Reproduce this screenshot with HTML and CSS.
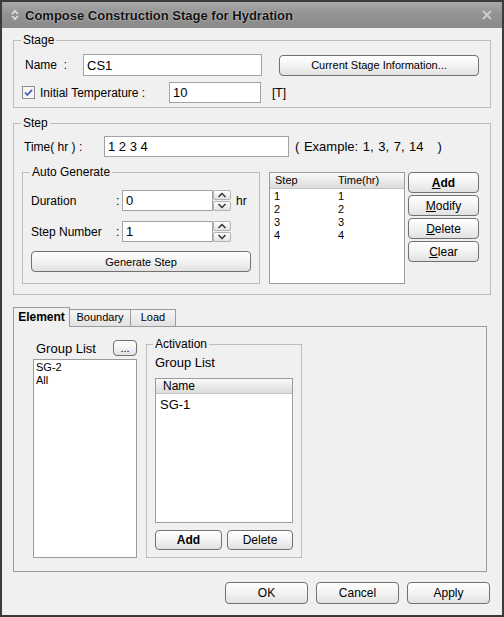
FILE: index.html
```html
<!DOCTYPE html>
<html lang="en">
<head>
    <meta charset="UTF-8">
    <title>Compose Construction Stage for Hydration</title>
    <link rel="stylesheet" href="styles.css">
</head>
<body>
<div class="window">
    <div class="titlebar">
        <svg class="title-icon" viewBox="0 0 8 12"><path d="M1 5 4 2 7 5M1 7 4 10 7 7" fill="none" stroke="#e4e4e4" stroke-width="1.6"/></svg>
        <span class="title">Compose Construction Stage for Hydration</span>
        <svg class="close" viewBox="0 0 10 10"><path d="M1 1 9 9M9 1 1 9" stroke="#cdcdcd" stroke-width="2"/></svg>
    </div>

    <div class="content">
        <fieldset class="group stage">
            <legend>Stage</legend>
            <div class="row">
                <span class="lbl lbl-name">Name&nbsp; :</span>
                <input class="field f-name" type="text" value="CS1">
                <button class="btn btn-info">Current Stage Information...</button>
            </div>
            <div class="row row-temp">
                <span class="check"><svg viewBox="0 0 13 13"><rect x="0.5" y="0.5" width="12" height="12" fill="#f6f6f6" stroke="#8e8e8e"/><path d="M3 6.5 5.3 9 10 3.8" fill="none" stroke="#3f5fc4" stroke-width="1.8"/></svg></span>
                <span class="lbl lbl-temp">Initial Temperature :</span>
                <input class="field f-temp" type="text" value="10">
                <span class="unit">[T]</span>
            </div>
        </fieldset>

        <fieldset class="group step">
            <legend>Step</legend>
            <div class="row">
                <span class="lbl lbl-time">Time( hr ) :</span>
                <input class="field f-time" type="text" value="1 2 3 4">
                <span class="example">( Example: 1, 3, 7, 14&nbsp;&nbsp; )</span>
            </div>
            <div class="step-main">
                <fieldset class="group auto">
                    <legend>Auto Generate</legend>
                    <div class="row">
                        <span class="lbl lbl-auto">Duration</span><span class="colon">:</span>
                        <input class="field f-num" type="text" value="0">
                        <span class="spin">
                            <span class="spin-btn"><svg viewBox="0 0 16 8"><path d="M4.5 6 8 2.5 11.5 6" fill="none" stroke="#333" stroke-width="1.5"/></svg></span>
                            <span class="spin-btn"><svg viewBox="0 0 16 8"><path d="M4.5 2 8 5.5 11.5 2" fill="none" stroke="#333" stroke-width="1.5"/></svg></span>
                        </span>
                        <span class="unit-hr">hr</span>
                    </div>
                    <div class="row row-next">
                        <span class="lbl lbl-auto">Step Number</span><span class="colon">:</span>
                        <input class="field f-num" type="text" value="1">
                        <span class="spin">
                            <span class="spin-btn"><svg viewBox="0 0 16 8"><path d="M4.5 6 8 2.5 11.5 6" fill="none" stroke="#333" stroke-width="1.5"/></svg></span>
                            <span class="spin-btn"><svg viewBox="0 0 16 8"><path d="M4.5 2 8 5.5 11.5 2" fill="none" stroke="#333" stroke-width="1.5"/></svg></span>
                        </span>
                    </div>
                    <button class="btn btn-gen">Generate Step</button>
                </fieldset>

                <div class="listview steps">
                    <div class="lv-head"><span class="col-step">Step</span><span>Time(hr)</span></div>
                    <div class="lv-body">
                        <div class="lv-row"><span class="col-step">1</span><span>1</span></div>
                        <div class="lv-row"><span class="col-step">2</span><span>2</span></div>
                        <div class="lv-row"><span class="col-step">3</span><span>3</span></div>
                        <div class="lv-row"><span class="col-step">4</span><span>4</span></div>
                    </div>
                </div>

                <div class="side-btns">
                    <button class="btn btn-side"><b><u>A</u>dd</b></button>
                    <button class="btn btn-side"><u>M</u>odify</button>
                    <button class="btn btn-side"><u>D</u>elete</button>
                    <button class="btn btn-side"><u>C</u>lear</button>
                </div>
            </div>
        </fieldset>

        <div class="tabs">
            <div class="tab tab-element active">Element</div>
            <div class="tab tab-boundary">Boundary</div>
            <div class="tab tab-load">Load</div>
        </div>
        <div class="tab-panel">
            <div class="group-col">
                <div class="col-head">
                    <span class="col-title">Group List</span>
                    <button class="btn btn-more">...</button>
                </div>
                <div class="listbox">
                    <div>SG-2</div>
                    <div>All</div>
                </div>
            </div>
            <fieldset class="group activation">
                <legend>Activation</legend>
                <div class="sub-lbl">Group List</div>
                <div class="listview act-list">
                    <div class="lv-head"><span class="col-name">Name</span></div>
                    <div class="lv-body">
                        <div class="lv-row act-row">SG-1</div>
                    </div>
                </div>
                <div class="act-btns">
                    <button class="btn btn-act"><b>Add</b></button>
                    <button class="btn btn-act">Delete</button>
                </div>
            </fieldset>
        </div>

        <div class="dlg-btns">
            <button class="btn btn-dlg">OK</button>
            <button class="btn btn-dlg">Cancel</button>
            <button class="btn btn-dlg">Apply</button>
        </div>
    </div>
</div>
</body>
</html>
```

FILE: styles.css
```css
* { box-sizing: border-box; }
body { margin: 0; font-family: "Liberation Sans", Arial, sans-serif; font-size: 12px; color: #000; background: #f0f0f0; }

.window { width: 504px; height: 617px; border: 2px solid #3b3b3b; background: #f0f0f0; display: flex; flex-direction: column; }
.titlebar { height: 26px; flex: none; display: flex; align-items: center; padding-left: 9px; background: linear-gradient(#a9a9a9, #939393 45%, #8a8a8a); }
.title-icon { width: 8px; height: 12px; margin-right: 6px; }
.title { flex: 1; font-size: 13px; font-weight: bold; color: #111; text-shadow: 0 0 2px rgba(255, 255, 255, 0.7); }
.close { width: 10px; height: 10px; margin-right: 10px; }

.content { flex: 1; padding: 5px 11px 0 11px; }

/* group boxes */
.group { margin: 0; min-width: 0; border: 1px solid #bdbdbd; }
.group legend { padding: 0 2px; font-size: 12px; line-height: 14px; }

.row { display: flex; align-items: center; height: 21px; }
.lbl { flex: none; white-space: nowrap; }

.field { flex: none; height: 21px; margin: 0; padding: 0 3px; border: 1px solid #a3a3a3; background: #fff; font: 13px "Liberation Sans", Arial, sans-serif; color: #000; outline: none; }

.btn { flex: none; height: 21px; margin: 0; padding: 0; border: 1px solid #717171; border-radius: 4px; background: linear-gradient(#ffffff, #f4f4f4 45%, #e1e1e1); font: 11px "Liberation Sans", Arial, sans-serif; color: #000; }
.btn b { font-size: 12px; }

/* stage */
.stage { padding: 7px 11px 4px 11px; }
.stage legend { margin-left: -4px; }
.stage .row:first-of-type { height: 22px; }
.lbl-name { width: 58px; }
.f-name { width: 179px; height: 22px; }
.btn-info { width: 200px; margin-left: 17px; }
.row-temp { margin-top: 6px; }
.check { width: 13px; height: 13px; margin-left: -3px; display: flex; }
.check svg { width: 13px; height: 13px; }
.lbl-temp { width: 129px; margin-left: 5px; }
.f-temp { width: 92px; }
.unit { margin-left: 11px; }

/* step */
.step { margin-top: 8px; padding: 6px 11px 10px 8px; }
.step legend { margin-left: -1px; }
.lbl-time { width: 80px; margin-left: 2px; }
.f-time { width: 185px; }
.example { margin-left: 6px; font-size: 13px; word-spacing: 1px; white-space: nowrap; }

.step-main { display: flex; align-items: flex-start; margin-top: 8px; }
.auto { width: 238px; flex: none; padding: 11px 8px 11px 8px; }
.auto legend { margin-left: -1px; }
.lbl-auto { width: 85px; }
.colon { width: 6px; }
.f-num { width: 91px; }
.spin { display: flex; flex-direction: column; justify-content: space-between; width: 18px; height: 21px; }
.spin-btn { display: flex; align-items: center; justify-content: center; height: 10px; border: 1px solid #b3b3b3; border-radius: 2px; background: linear-gradient(#ffffff, #e2e2e2); }
.spin-btn svg { width: 16px; height: 8px; }
.unit-hr { margin-left: 5px; }
.row-next { margin-top: 10px; }
.btn-gen { display: block; width: 220px; margin-top: 9px; }

/* list views */
.listview { flex: none; border: 1px solid #9c9c9c; background: #fff; }
.lv-head { display: flex; height: 16px; line-height: 15px; font-size: 11px; background: linear-gradient(#fbfbfb, #e8e8e8 55%, #dcdcdc); border-bottom: 1px solid #c4c4c4; }
.lv-body { padding-top: 1px; }
.lv-row { display: flex; font-size: 11px; line-height: 13px; }
.steps { width: 136px; height: 112px; margin: 7px 0 0 9px; }
.steps .lv-head { padding-left: 5px; }
.steps .lv-row { padding-left: 4px; }
.col-step { width: 63px; }
.steps .lv-row .col-step { width: 64px; }

.side-btns { display: flex; flex-direction: column; gap: 2px; width: 71px; margin: 7px 0 0 3px; }
.btn-side { width: 71px; font-size: 12px; }

/* tabs */
.tabs { display: flex; align-items: flex-end; height: 19px; margin-top: 12px; }
.tab { height: 17px; line-height: 15px; text-align: center; font-size: 11px; border: 1px solid #9c9c9c; border-bottom: none; border-left: none; background: linear-gradient(#f6f6f6, #e2e2e2); }
.tab.active { position: relative; z-index: 1; height: 20px; margin-bottom: -1px; line-height: 19px; font-size: 12px; font-weight: bold; border-left: 1px solid #9c9c9c; background: #f0f0f0; }
.tab-element { width: 57px; }
.tab-boundary { width: 61px; }
.tab-load { width: 45px; }

.tab-panel { display: flex; align-items: flex-start; height: 246px; margin-right: 4px; padding: 10px 0 0 19px; border: 1px solid #9c9c9c; }
.group-col { width: 104px; flex: none; margin-right: 9px; }
.col-head { display: flex; align-items: center; height: 22px; }
.col-title { margin-left: 3px; font-size: 13px; }
.btn-more { width: 24px; height: 16px; margin-left: auto; margin-top: -1px; font-size: 11px; line-height: 10px; }
.listbox { height: 199px; padding: 1px 2px; border: 1px solid #9c9c9c; background: #fff; font-size: 11px; line-height: 13px; }

.activation { width: 156px; flex: none; padding: 5px 8px 7px 8px; }
.activation legend { margin-left: -2px; }
.sub-lbl { line-height: 14px; font-size: 13px; }
.act-list { width: 138px; height: 145px; margin-top: 8px; }
.act-list .lv-head { height: 15px; line-height: 14px; padding-left: 7px; font-size: 12px; }
.act-row { padding: 2px 0 0 4px; font-size: 13px; line-height: 15px; }
.act-btns { display: flex; gap: 5px; margin-top: 7px; }
.btn-act { width: 66px; height: 20px; font-size: 12px; }
.btn-act:first-child { width: 67px; }

.dlg-btns { display: flex; justify-content: flex-end; gap: 8px; margin-top: 10px; padding-right: 1px; }
.btn-dlg { width: 83px; height: 22px; font-size: 12px; }
```
